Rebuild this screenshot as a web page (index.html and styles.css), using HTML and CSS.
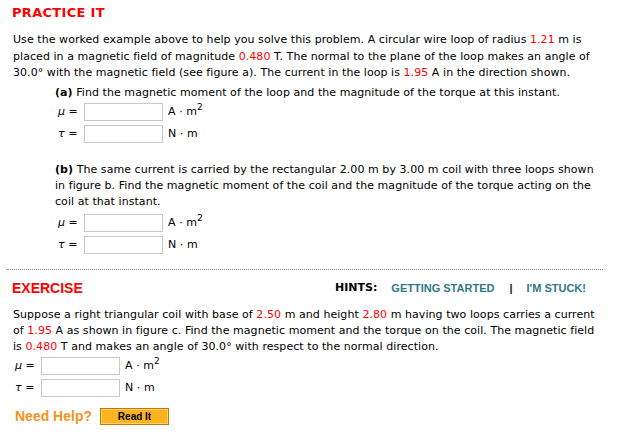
FILE: index.html
```html
<!DOCTYPE html>
<html>
<head>
<meta charset="utf-8">
<link rel="stylesheet" href="styles.css">
</head>
<body>
<div class="page">
  <h2 class="title">PRACTICE IT</h2>
  <p class="text intro">Use the worked example above to help you solve this problem. A circular wire loop of radius <span class="val">1.21</span> m is placed in a magnetic field of magnitude <span class="val">0.480</span> T. The normal to the plane of the loop makes an angle of 30.0° with the magnetic field (see figure a). The current in the loop is <span class="val">1.95</span> A in the direction shown.</p>

  <div class="part part-a">
    <p class="text"><b>(a)</b> Find the magnetic moment of the loop and the magnitude of the torque at this instant.</p>
    <div class="answers">
      <div class="row"><span class="lbl"><i>μ</i> =</span><span class="box"></span><span class="unit">A · m<sup>2</sup></span></div>
      <div class="row"><span class="lbl"><i>τ</i> =</span><span class="box"></span><span class="unit">N · m</span></div>
    </div>
  </div>

  <div class="part part-b">
    <p class="text"><b>(b)</b> The same current is carried by the rectangular 2.00 m by 3.00 m coil with three loops shown in figure b. Find the magnetic moment of the coil and the magnitude of the torque acting on the coil at that instant.</p>
    <div class="answers">
      <div class="row"><span class="lbl"><i>μ</i> =</span><span class="box"></span><span class="unit">A · m<sup>2</sup></span></div>
      <div class="row"><span class="lbl"><i>τ</i> =</span><span class="box"></span><span class="unit">N · m</span></div>
    </div>
  </div>

  <hr class="divider">

  <div class="ex-head">
    <h2 class="ex-title">EXERCISE</h2>
    <div class="hints">
      <span class="hints-label">HINTS:</span>
      <a class="hint">GETTING STARTED</a>
      <span class="sep">|</span>
      <a class="hint">I'M STUCK!</a>
    </div>
  </div>
  <p class="text ex-text">Suppose a right triangular coil with base of <span class="val">2.50</span> m and height <span class="val">2.80</span> m having two loops carries a current of <span class="val">1.95</span> A as shown in figure c. Find the magnetic moment and the torque on the coil. The magnetic field is <span class="val">0.480</span> T and makes an angle of 30.0° with respect to the normal direction.</p>
  <div class="answers ex-answers">
    <div class="row"><span class="lbl"><i>μ</i> =</span><span class="box"></span><span class="unit">A · m<sup>2</sup></span></div>
    <div class="row"><span class="lbl"><i>τ</i> =</span><span class="box"></span><span class="unit">N · m</span></div>
  </div>

  <div class="help">
    <span class="need">Need Help?</span>
    <span class="btn">Read It</span>
  </div>
</div>
</body>
</html>
```
FILE: styles.css
```css
html, body {
  margin: 0;
  padding: 0;
  background: #fff;
}
body {
  font-family: "DejaVu Sans", Verdana, sans-serif;
  font-size: 11px;
  letter-spacing: 0.06px;
  color: #000;
}
.page {
  width: 590px;
  padding: 4px 0 0 13px;
}
.title {
  margin: 0 0 0 -1px;
  font-size: 13px;
  letter-spacing: 0.3px;
  line-height: 18px;
  font-weight: bold;
  color: #f00;
}
.text {
  margin: 0;
  line-height: 16px;
}
.intro {
  margin-top: 10px;
  line-height: 16.5px;
}
.val {
  color: #f00;
}
.part {
  padding-left: 42px;
}
.part-a {
  margin-top: 3px;
}
.part-b {
  margin-top: 17px;
}
.answers {
  display: flex;
  flex-direction: column;
  padding-left: 3px;
}
.part-b .answers {
  margin-top: 2px;
}
.row {
  display: flex;
  align-items: center;
  height: 22px;
}
.lbl {
  width: 26px;
}
.box {
  width: 77px;
  height: 16px;
  border: 1px solid #c8c8c8;
  background: #fff;
}
.unit {
  margin-left: 5px;
}
sup {
  font-size: 9px;
  line-height: 0;
  vertical-align: 5px;
}
.divider {
  margin: 13px 0 0 -6px;
  width: 596px;
  border: 0;
  border-top: 1px dotted #888;
  height: 0;
}
.ex-head {
  display: flex;
  align-items: center;
  margin-top: 9px;
  height: 18px;
  letter-spacing: 0;
}
.ex-title {
  margin: 0 0 0 -1px;
  font-family: "Liberation Sans", Arial, sans-serif;
  font-size: 14px;
  font-weight: bold;
  color: #f00;
  width: 323px;
}
.hints {
  display: flex;
  align-items: center;
  font-family: "Liberation Sans", Arial, sans-serif;
  font-weight: bold;
  font-size: 11px;
}
.hints-label {
  font-family: "DejaVu Sans", Verdana, sans-serif;
  font-size: 11px;
  color: #000;
  margin-right: 14px;
}
.hint {
  color: #2f7a82;
}
.sep {
  margin: 0 14px 0 15px;
  color: #222;
}
.ex-text {
  margin-top: 10px;
}
.ex-answers {
  margin-top: 0;
  padding-left: 2px;
}
.help {
  display: flex;
  align-items: center;
  margin-top: 9px;
  padding-left: 2px;
  letter-spacing: 0;
}
.need {
  font-family: "Liberation Sans", Arial, sans-serif;
  font-weight: bold;
  font-size: 14px;
  color: #f7931d;
  margin-right: 8px;
}
.btn {
  display: inline-flex;
  align-items: center;
  justify-content: center;
  width: 67px;
  height: 15px;
  border: 1px solid #c97700;
  box-shadow: inset 0 0 0 1px #ffd36a;
  background: #fbb41f;
  font-family: "Liberation Sans", Arial, sans-serif;
  font-weight: bold;
  font-size: 10px;
  color: #000;
}
```
